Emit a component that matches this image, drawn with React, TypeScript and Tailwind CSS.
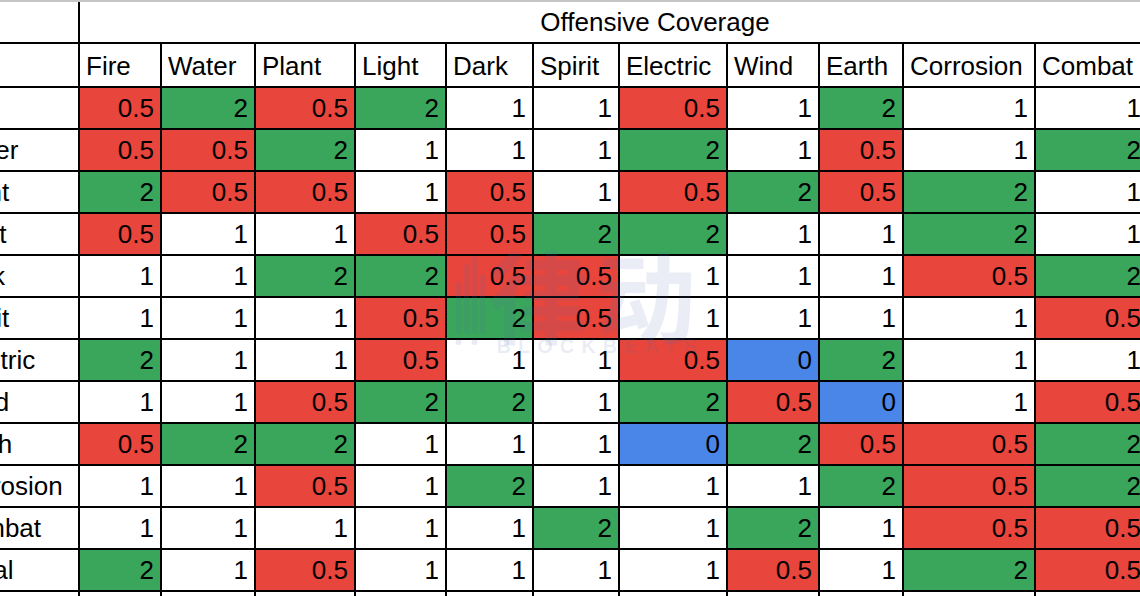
import React from 'react';

type Val = '0' | '0.5' | '1' | '2' | '';

const columns = ['Fire', 'Water', 'Plant', 'Light', 'Dark', 'Spirit', 'Electric', 'Wind', 'Earth', 'Corrosion', 'Combat', ''];

const rows: { label: string; values: Val[] }[] = [
  { label: 'Fire', values: ['0.5', '2', '0.5', '2', '1', '1', '0.5', '1', '2', '1', '1', ''] },
  { label: 'Water', values: ['0.5', '0.5', '2', '1', '1', '1', '2', '1', '0.5', '1', '2', ''] },
  { label: 'Plant', values: ['2', '0.5', '0.5', '1', '0.5', '1', '0.5', '2', '0.5', '2', '1', ''] },
  { label: 'Light', values: ['0.5', '1', '1', '0.5', '0.5', '2', '2', '1', '1', '2', '1', ''] },
  { label: 'Dark', values: ['1', '1', '2', '2', '0.5', '0.5', '1', '1', '1', '0.5', '2', ''] },
  { label: 'Spirit', values: ['1', '1', '1', '0.5', '2', '0.5', '1', '1', '1', '1', '0.5', ''] },
  { label: 'Electric', values: ['2', '1', '1', '0.5', '1', '1', '0.5', '0', '2', '1', '1', ''] },
  { label: 'Wind', values: ['1', '1', '0.5', '2', '2', '1', '2', '0.5', '0', '1', '0.5', ''] },
  { label: 'Earth', values: ['0.5', '2', '2', '1', '1', '1', '0', '2', '0.5', '0.5', '2', ''] },
  { label: 'Corrosion', values: ['1', '1', '0.5', '1', '2', '1', '1', '1', '2', '0.5', '2', ''] },
  { label: 'Combat', values: ['1', '1', '1', '1', '1', '2', '1', '2', '1', '0.5', '0.5', ''] },
  { label: 'Metal', values: ['2', '1', '0.5', '1', '1', '1', '1', '0.5', '1', '2', '0.5', ''] },
  { label: '', values: ['', '', '', '', '', '', '', '', '', '', '', ''] },
];

const cellBg: Record<Val, string> = {
  '0': 'bg-[#4a86e8]',
  '0.5': 'bg-[#e8453c]',
  '1': 'bg-white',
  '2': 'bg-[#3aa65b]',
  '': 'bg-white',
};

// faint site watermark laid over the sheet
const Watermark = () => (
  <div className="pointer-events-none absolute left-[452px] top-[250px] flex items-start text-[rgba(80,110,170,0.12)]">
    <svg width="36" height="96" viewBox="0 0 36 96" className="mt-[2px]">
      <g fill="rgba(80,110,170,0.13)">
        <rect x="4" y="30" width="5" height="52" rx="2.5" />
        <rect x="12" y="12" width="5" height="70" rx="2.5" />
        <rect x="20" y="4" width="5" height="78" rx="2.5" />
        <rect x="28" y="22" width="5" height="60" rx="2.5" />
        <circle cx="6.5" cy="90" r="3" />
        <circle cx="22.5" cy="90" r="3" />
      </g>
    </svg>
    <div className="flex flex-col items-end">
      <span className="text-[100px] leading-[86px] font-bold tracking-[8px]" style={{ fontFamily: '"Noto Sans CJK SC", sans-serif' }}>
        律动
      </span>
      <span className="text-[20px] leading-[20px] font-bold tracking-[7px]">BLOCKBEATS</span>
    </div>
  </div>
);

export default function App() {
  return (
    <div
      className="relative w-[1140px] h-[596px] overflow-hidden bg-white text-black"
      style={{ fontFamily: '"Liberation Sans", Arial, sans-serif' }}
    >
      <div className="h-[2px] bg-[#c6c6c6]" />
      <div className="ml-[-56px] w-[1286px] grid grid-cols-[134px_80px_92px_98px_89px_85px_84px_106px_90px_82px_130px_111px_81px] grid-rows-[40px_42px] auto-rows-[40px] gap-[2px] bg-black text-[26px] leading-[30px]">
        {/* merged title row */}
        <div className="bg-white" />
        <div className="col-span-12 bg-white flex items-center justify-center">Offensive Coverage</div>

        {/* column headers */}
        <div className="bg-white" />
        {columns.map((c, i) => (
          <div key={i} className="bg-white flex items-center pl-[6px] pt-[2px] whitespace-nowrap">
            {c}
          </div>
        ))}

        {rows.map((r, ri) => (
          <React.Fragment key={ri}>
            <div className="bg-white flex items-center pl-[6px] whitespace-nowrap">{r.label}</div>
            {r.values.map((v, ci) => (
              <div key={ci} className={`${cellBg[v]} flex items-center justify-end pr-[6px]`}>
                {v}
              </div>
            ))}
          </React.Fragment>
        ))}
      </div>
      <Watermark />
    </div>
  );
}
